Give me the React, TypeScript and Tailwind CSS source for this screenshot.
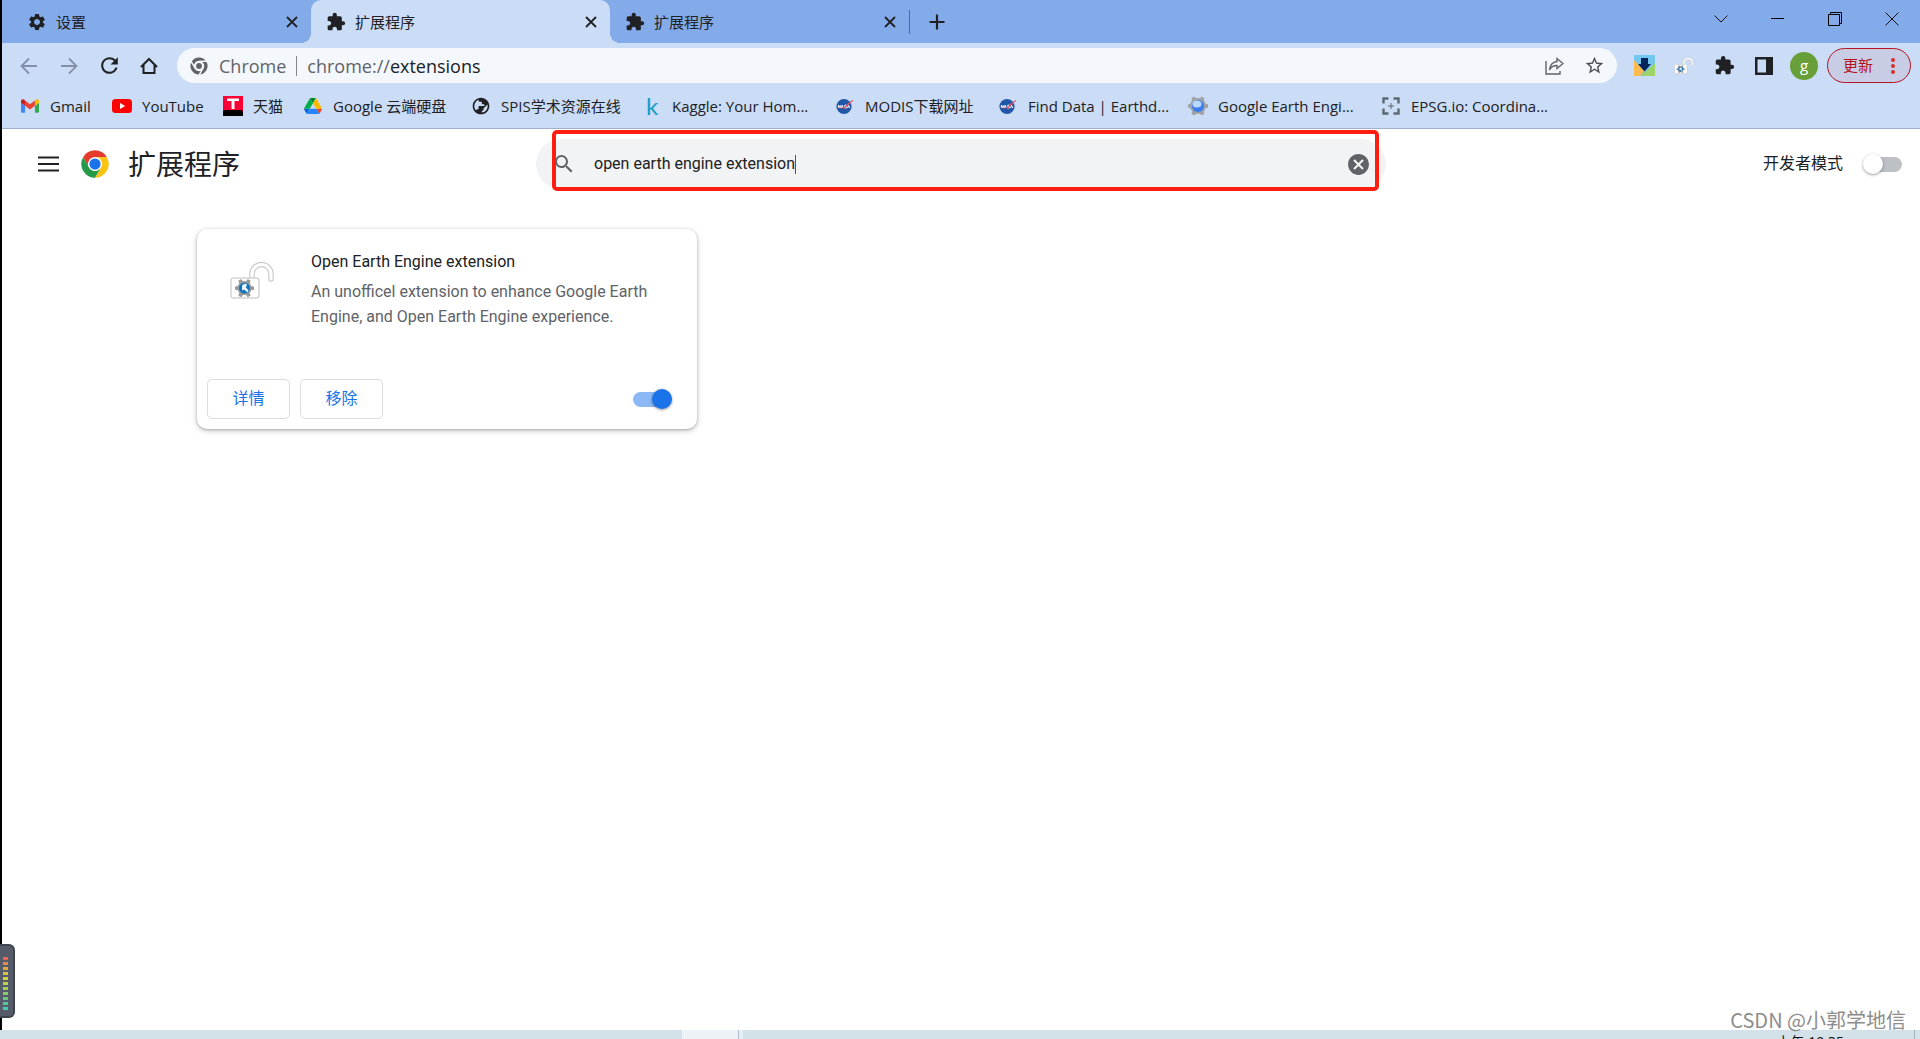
import React, {useState} from "react";
import {
    MdExtension, MdPublic, MdRefresh, MdSearch, MdSettings, MdStarBorder, MdCancel
} from "react-icons/md";

const ChromeLogo = ({className, mono = false}: { className: string, mono?: boolean }) => {
    const piece = "M4.95 13A22 22 0 0 1 43.05 13L24 13A11 11 0 0 0 14.47 29.5Z"
    return (
        <svg viewBox="0 0 48 48" className={className} aria-hidden="true">
            <g stroke={mono ? "#f4f8fd" : "none"} strokeWidth={mono ? 3 : 0}>
                <path d={piece} fill={mono ? "#5f6368" : "#e33b2e"}/>
                <path d={piece} fill={mono ? "#5f6368" : "#fcc313"} transform="rotate(120 24 24)"/>
                <path d={piece} fill={mono ? "#5f6368" : "#269a48"} transform="rotate(240 24 24)"/>
            </g>
            <circle cx="24" cy="24" r="11" fill={mono ? "#f4f8fd" : "#fff"}/>
            <circle cx="24" cy="24" r={mono ? 7 : 9} fill={mono ? "#5f6368" : "#1a73e8"}/>
        </svg>
    )
}

const GmailIcon = () => (
    <svg viewBox="52 42 88 66" className="w-[18px] h-[14px]" aria-hidden="true">
        <path fill="#4285f4" d="M58 108h14V74L52 59v43c0 3.32 2.69 6 6 6"/>
        <path fill="#34a853" d="M120 108h14c3.32 0 6-2.69 6-6V59l-20 15"/>
        <path fill="#fbbc04" d="M120 48v26l20-15v-8c0-7.42-8.47-11.65-14.4-7.2"/>
        <path fill="#ea4335" d="M72 74V48l24 18 24-18v26L96 92"/>
        <path fill="#c5221f" d="M52 51v8l20 15V48l-5.6-4.2c-5.94-4.45-14.4-.22-14.4 7.2"/>
    </svg>
)

const YouTubeIcon = () => (
    <svg viewBox="0 0 20 14" className="w-5 h-[14px]" aria-hidden="true">
        <rect width="20" height="14" rx="3.5" fill="#f00"/>
        <path d="M8 4v6l5.2-3z" fill="#fff"/>
    </svg>
)

const TmallIcon = () => (
    <svg viewBox="0 0 20 20" className="w-5 h-5" aria-hidden="true">
        <rect width="20" height="20" fill="#ff0036"/>
        <path d="M0 16q0-2 2-2h16q2 0 2 2v4H0z" fill="#000"/>
        <path d="M4 2.500h12v2.500h-4.500v8h-3V5H4z" fill="#fff"/>
    </svg>
)

const DriveIcon = () => (
    <svg viewBox="0 0 87.3 78" className="w-[18px] h-4" aria-hidden="true">
        <path d="m6.6 66.85 3.85 6.65c.8 1.4 1.95 2.5 3.3 3.3L27.5 53H0c0 1.55.4 3.1 1.2 4.5z" fill="#0066da"/>
        <path d="M43.65 25 29.9 1.2c-1.35.8-2.5 1.9-3.3 3.3l-25.4 44A9.06 9.06 0 0 0 0 53h27.5z" fill="#00ac47"/>
        <path d="M73.55 76.8c1.35-.8 2.5-1.9 3.3-3.3l1.6-2.75 7.65-13.25c.8-1.4 1.2-2.95 1.2-4.5H59.8l5.85 11.5z" fill="#ea4335"/>
        <path d="M43.65 25 57.4 1.2C56.05.4 54.5 0 52.9 0H34.4c-1.6 0-3.15.45-4.5 1.2z" fill="#00832d"/>
        <path d="M59.8 53H27.5L13.75 76.8c1.35.8 2.9 1.2 4.5 1.2h50.8c1.6 0 3.15-.45 4.5-1.2z" fill="#2684fc"/>
        <path d="m73.4 26.5-12.7-22c-.8-1.4-1.95-2.5-3.3-3.3L43.65 25 59.8 53h27.45c0-1.55-.4-3.1-1.2-4.5z" fill="#ffba00"/>
    </svg>
)

const NasaIcon = () => (
    <svg viewBox="0 0 18 17" className="w-[18px] h-[17px]" aria-hidden="true">
        <circle cx="8" cy="8.5" r="7.6" fill="#2157a8"/>
        <path d="M2.4 10V7.2L4.2 10V7.2M5.2 10l1-2.8 1 2.8M10.6 7.2H8.8v1.3h1.6V10H8.4M11.6 10l1-2.8 1 2.8"
              fill="none" stroke="#fff" strokeWidth="1"/>
        <path d="M17 2.5C13 4.500 10.500 7 8.500 11" fill="none" stroke="#e8505f" strokeWidth="1.2"/>
        <path d="M2 9.5C7 11 11 9 15 5" fill="none" stroke="#e8505f" strokeWidth=".5"/>
    </svg>
)

const EarthEngineIcon = () => (
    <svg viewBox="0 0 20 20" className="w-5 h-5" aria-hidden="true">
        <g fill="#a0a2a5">
            <rect x="0" y="8" width="20" height="4" rx="1"/>
            <rect x="0" y="8" width="20" height="4" rx="1" transform="rotate(60 10 10)"/>
            <rect x="0" y="8" width="20" height="4" rx="1" transform="rotate(120 10 10)"/>
            <circle cx="10" cy="10" r="8"/>
        </g>
        <circle cx="10" cy="10" r="6" fill="#3b7cf0"/>
        <ellipse cx="9" cy="8" rx="4.5" ry="3.5" fill="#b9d8fd"/>
    </svg>
)

const EpsgIcon = () => (
    <svg viewBox="0 0 18 18" className="w-[18px] h-[18px]" fill="none" stroke="#5c6970" aria-hidden="true">
        <path d="M1.5 6.5v-5h5M11.5 1.5h5v5M16.5 11.5v5h-5M6.5 16.5h-5v-5" strokeWidth="2.4"/>
        <path d="M9 6v6M6 9h6" strokeWidth="1"/>
    </svg>
)

const LockIcon = ({className}: { className: string }) => (
    <svg viewBox="0 0 44 38" className={className} aria-hidden="true">
        <path d="M22 19v-6a9.5 9.5 0 0 1 19 0v5" fill="none" stroke="#c8c8c8" strokeWidth="5.4" strokeLinecap="round"/>
        <path d="M22 19v-6a9.5 9.5 0 0 1 19 0v5" fill="none" stroke="#fff" strokeWidth="3.2" strokeLinecap="round"/>
        <rect x="1" y="17" width="28" height="20" rx="2" fill="#fff" stroke="#bdbdbd"/>
        <g fill="#999">
            <rect x="5" y="25.2" width="19" height="3.8" rx="1"/>
            <rect x="5" y="25.2" width="19" height="3.8" rx="1" transform="rotate(60 14.5 27.1)"/>
            <rect x="5" y="25.2" width="19" height="3.8" rx="1" transform="rotate(120 14.5 27.1)"/>
            <circle cx="14.5" cy="27.1" r="7"/>
        </g>
        <circle cx="14.5" cy="27.1" r="5.4" fill="#0b72c4"/>
        <path d="M12 24.5q3-3 5-1l-1 3 2.5 3-1 2-3.500-3-2 1z" fill="#eaf5fd"/>
    </svg>
)

const tabs = [
    {title: "设置", icon: <MdSettings size={20}/>, active: false},
    {title: "扩展程序", icon: <MdExtension size={20}/>, active: true},
    {title: "扩展程序", icon: <MdExtension size={20}/>, active: false},
]

const bookmarks = [
    {name: "Gmail", icon: <GmailIcon/>, width: "w-[92px]"},
    {name: "YouTube", icon: <YouTubeIcon/>, width: "w-[111px]"},
    {name: "天猫", icon: <TmallIcon/>, width: "w-20"},
    {name: "Google 云端硬盘", icon: <DriveIcon/>, width: "w-[168px]"},
    {name: "SPIS学术资源在线", icon: <MdPublic size={22} className="text-[#202124] -scale-x-100"/>, width: "w-[171px]"},
    {name: "Kaggle: Your Hom...", icon: <span className="text-[24px] leading-5 text-[#149bc8] font-[Lato,sans-serif]">k</span>, width: "w-[193px]"},
    {name: "MODIS下载网址", icon: <NasaIcon/>, width: "w-[163px]"},
    {name: "Find Data | Earthd...", icon: <NasaIcon/>, width: "w-[190px]"},
    {name: "Google Earth Engi...", icon: <EarthEngineIcon/>, width: "w-[193px]"},
    {name: "EPSG.io: Coordina...", icon: <EpsgIcon/>, width: "w-[193px]"},
]

const TabStrip = () => (
    <div className="h-[43px] flex bg-[#84abe9] text-[#202124]">
        {tabs.map((tab, i) => (
            <div key={i}
                 className={"relative flex items-center w-[299px] pl-[15px] pr-[9px] h-[43px] first:w-[309px] first:pl-[25px] " +
                     (tab.active ? "bg-[#cbdcf6] rounded-t-[10px]" : "")}>
                {tab.active && <>
                    <span className="absolute bottom-0 -left-[10px] w-[10px] h-[10px] bg-[radial-gradient(circle_at_0_0,#84abe9_10px,#cbdcf6_10px)]"/>
                    <span className="absolute bottom-0 -right-[10px] w-[10px] h-[10px] bg-[radial-gradient(circle_at_100%_0,#84abe9_10px,#cbdcf6_10px)]"/>
                </>}
                {tab.icon}
                <span className="ml-[9px] flex-1 text-[15px] leading-5">{tab.title}</span>
                <button aria-label="关闭标签页" className="w-5 h-5 flex items-center justify-center">
                    <svg viewBox="0 0 12 12" className="w-3 h-3" stroke="#202124" strokeWidth="1.8"><path d="M1 1l10 10M11 1L1 11"/></svg>
                </button>
            </div>
        ))}
        <span className="w-px h-6 my-auto bg-[#4f6b96]"/>
        <button aria-label="新标签页" className="w-[54px] flex items-center justify-center">
            <svg viewBox="0 0 16 16" className="w-4 h-4" stroke="#202124" strokeWidth="2.2"><path d="M8 .5v15M.5 8h15"/></svg>
        </button>
        <div className="ml-auto flex h-[37px]">
            <button aria-label="搜索标签页" className="w-[57px] flex items-center justify-center">
                <svg viewBox="0 0 14 8" className="w-[14px] h-2" fill="none" stroke="#111"><path d="M.5.5L7 7 13.5.5"/></svg>
            </button>
            <button aria-label="最小化" className="w-[57px] flex items-center justify-center">
                <span className="w-[13px] h-px bg-black"/>
            </button>
            <button aria-label="还原" className="w-[57px] flex items-center justify-center">
                <svg viewBox="0 0 14 14" className="w-[14px] h-[14px]" fill="none" stroke="#000"><path d="M.5 2.5h11v11H.5zM2.5 2.5v-2h11v11h-2"/></svg>
            </button>
            <button aria-label="关闭" className="w-[57px] flex items-center justify-center">
                <svg viewBox="0 0 14 14" className="w-[14px] h-[14px]" stroke="#111"><path d="M.5.5l13 13M13.5.5l-13 13"/></svg>
            </button>
        </div>
    </div>
)

const ToolButton = ({label, children}: { label: string, children: React.ReactNode }) => (
    <button aria-label={label} className="w-10 h-[35px] shrink-0 flex items-center justify-center text-[#202124]">{children}</button>
)

const Toolbar = () => (
    <div className="h-[45px] flex items-center pl-[7px] pr-[9px]">
        <ToolButton label="后退">
            <svg viewBox="0 0 18 18" className="w-[18px] h-[18px]" fill="none" stroke="#8490a8" strokeWidth="1.8"><path d="M17 9H2M9 1.5L1.5 9 9 16.5"/></svg>
        </ToolButton>
        <ToolButton label="前进">
            <svg viewBox="0 0 18 18" className="w-[18px] h-[18px]" fill="none" stroke="#8490a8" strokeWidth="1.8"><path d="M1 9h15M9 1.5L16.5 9 9 16.5"/></svg>
        </ToolButton>
        <ToolButton label="重新加载"><MdRefresh size={25}/></ToolButton>
        <ToolButton label="主页">
            <svg viewBox="0 0 18 18" className="w-[18px] h-[18px]" fill="none" stroke="#202124" strokeWidth="2"><path d="M1 10L9 2l8 8M3.5 8v8h11V8"/></svg>
        </ToolButton>
        <div className="ml-2 flex-1 h-[35px] rounded-full bg-[#f4f8fd] flex items-center pl-3 pr-[3px] text-lg leading-6 text-[#5f6368]">
            <ChromeLogo mono className="w-5 h-5"/>
            <span className="ml-[10px]">Chrome</span>
            <span className="w-px h-5 mx-[10px] bg-[#80868b]"/>
            <span className="flex-1">chrome://<span className="text-[#202124]">extensions</span></span>
            <ToolButton label="分享">
                <svg viewBox="0 0 19 18" className="w-[19px] h-[18px]" fill="none" stroke="#5f6368" strokeWidth="1.4">
                    <path d="M1 4v13h14v-3"/>
                    <path d="M12 1.5l6 5-6 5V8.5c-4 0-6 1.5-7.5 4.5C5 8 7.5 5 12 4.5z"/>
                </svg>
            </ToolButton>
            <ToolButton label="为此标签页添加书签"><MdStarBorder size={21} color="#4a4d52"/></ToolButton>
        </div>
        <div className="ml-[7px] flex items-center">
            <ToolButton label="下载器">
                <svg viewBox="0 0 21 21" className="w-[21px] h-[21px]" aria-hidden="true">
                    <rect width="21" height="21" fill="#72c6ef"/>
                    <path d="M0 5l10.5 11L6 21H0z" fill="#fdbb4f"/>
                    <path d="M21 8L6.5 21H21z" fill="#9ed36a"/>
                    <path d="M7 3h7v6h3l-6.5 7.5L4 9h3z" fill="#04245c"/>
                </svg>
            </ToolButton>
            <ToolButton label="Open Earth Engine extension"><LockIcon className="w-5 h-[17px]"/></ToolButton>
            <ToolButton label="扩展程序"><MdExtension size={21}/></ToolButton>
            <ToolButton label="侧边栏">
                <svg viewBox="0 0 18 18" className="w-[18px] h-[18px]" aria-hidden="true"><path fillRule="evenodd" d="M0 0h18v18H0zM2.5 2.5v13H11v-13z" fill="#202124"/></svg>
            </ToolButton>
            <ToolButton label="个人资料">
                <span className="w-7 h-7 rounded-full bg-[#689f38] text-white text-[15px] leading-[26px]">g</span>
            </ToolButton>
            <button className="ml-[3px] w-21 h-[35px] rounded-full border border-[#b3141d] bg-[#c9cce5] flex items-center pl-[15px] text-[15px] text-[#b3141d]">
                更新
                <svg viewBox="0 0 4 16" className="ml-[18px] w-1 h-4" fill="#d93025"><circle cx="2" cy="2" r="2"/><circle cx="2" cy="8" r="2"/><circle cx="2" cy="14" r="2"/></svg>
            </button>
        </div>
    </div>
)

const BookmarkBar = () => (
    <nav className="h-[41px] flex items-center pl-[18px] pb-1 border-b border-[#9fb0cf]">
        {bookmarks.map(b => (
            <a key={b.name} href="#" className={"flex items-center whitespace-nowrap text-[15px] leading-5 text-[#202124] " + b.width}>
                <span className="w-5 mr-[10px] flex justify-center shrink-0">{b.icon}</span>
                {b.name}
            </a>
        ))}
    </nav>
)

const Toggle = ({id, checked, onChange}: { id: string, checked: boolean, onChange: (v: boolean) => void }) => (
    <span className={"relative w-[39px] h-5 flex items-center " + (checked ? "justify-start" : "justify-end")}>
        <input id={id} type="checkbox" role="switch" aria-label={id} checked={checked}
               onChange={e => onChange(e.target.checked)}
               className="appearance-none w-[35px] h-[15px] rounded-full bg-[#bdc1c6] checked:bg-[#8cb8f5]"/>
        <span className={"absolute top-0 w-5 h-5 rounded-full pointer-events-none shadow-[0_1px_3px_rgba(0,0,0,0.4)] " +
            (checked ? "right-0 bg-[#1a73e8]" : "left-0 bg-white")}/>
    </span>
)

const ExtensionCard = () => {
    const [enabled, setEnabled] = useState(true)

    return (
        <article className="h-[200px] rounded-[10px] bg-white flex flex-col shadow-[0_1px_3px_rgba(60,64,67,0.35),0_2px_6px_rgba(60,64,67,0.2)]">
            <div className="flex-1 flex pt-5 pl-[33px] pr-6">
                <LockIcon className="mt-3 w-11 h-[38px] shrink-0"/>
                <div className="ml-[37px]">
                    <h2 className="text-base leading-[26px] text-[#202124]">Open Earth Engine extension</h2>
                    <p className="mt-1 text-base leading-[25px] text-[#5f6368]">
                        An unofficel extension to enhance Google Earth Engine, and Open Earth Engine experience.
                    </p>
                </div>
            </div>
            <div className="flex items-center gap-[10px] pl-[10px] pr-[25px] pb-[10px]">
                <button className="w-[83px] h-10 border border-[#dadce0] rounded-[5px] text-base text-[#1a73e8]">详情</button>
                <button className="w-[83px] h-10 border border-[#dadce0] rounded-[5px] text-base text-[#1a73e8]">移除</button>
                <div className="ml-auto"><Toggle id="启用" checked={enabled} onChange={setEnabled}/></div>
            </div>
        </article>
    )
}

const PageHeader = () => {
    const [query, setQuery] = useState("open earth engine extension")
    const [devMode, setDevMode] = useState(false)

    return (
        <header className="h-[70px] grid grid-cols-[1fr_850px_1fr] items-center">
            <div className="flex items-center pl-9">
                <button aria-label="主菜单">
                    <svg viewBox="0 0 21 16" className="w-[21px] h-4" stroke="#202124" strokeWidth="2"><path d="M0 1.5h21M0 8h21M0 14.5h21"/></svg>
                </button>
                <ChromeLogo className="ml-[21px] w-[30px] h-[30px]"/>
                <h1 className="ml-[18px] pt-1 text-[28px] leading-9 text-[#202124]">扩展程序</h1>
            </div>
            <div className="relative h-[50px] rounded-full bg-[#f1f3f4] flex items-center pl-4 pr-[15px]">
                <MdSearch size={24} color="#5f6368"/>
                <input type="text" aria-label="搜索扩展程序" value={query} onChange={e => setQuery(e.target.value)}
                       className="ml-[18px] [field-sizing:content] bg-transparent outline-none text-base leading-5 text-[#202124]"/>
                <span className="w-px h-[19px] bg-[#1a5fc9]"/>
                <button aria-label="清除搜索内容" className="ml-auto" onClick={() => setQuery("")}><MdCancel size={25} color="#5f6368"/></button>
                <span className="absolute -top-[9px] left-4 right-[7px] h-[61px] border-4 border-[#ff1f10] rounded-[5px] pointer-events-none"/>
            </div>
            <div className="flex items-center justify-end pr-[18px] gap-5">
                <label htmlFor="开发者模式" className="text-base text-[#202124]">开发者模式</label>
                <Toggle id="开发者模式" checked={devMode} onChange={setDevMode}/>
            </div>
        </header>
    )
}

// volume meter docked to the left screen edge
const meterColors = [
    "bg-[#e8635c]", "bg-[#e08a4e]", "bg-[#e5a63c]", "bg-[#d8c04a]", "bg-[#d6cf3f]", "bg-[#bcd04c]",
    "bg-[#a3cf50]", "bg-[#86cc6c]", "bg-[#68c97e]", "bg-[#4fc898]", "bg-[#3fcdb4]",
]

const EdgeMeter = () => (
    <div className="absolute left-0 bottom-[21px] w-[15px] h-[74px] rounded-r-md bg-[#555b69] border-2 border-l-0 border-[#3f434e] pt-[11px] pl-[3px]">
        <div className="flex flex-col gap-[2px] w-[5px]">
            {meterColors.map(c => <span key={c} className={"h-[3px] " + c}/>)}
        </div>
    </div>
)

const Taskbar = () => (
    <footer className="h-[9px] overflow-hidden bg-[#d3e1e9] flex text-sm leading-5 text-[#111]">
        <span className="ml-[682px] w-14 bg-[#ecf2f6]"/>
        <span className="w-px bg-[#a9bdca]"/>
        <span className="w-1 bg-[#e6eef3]"/>
        <span className="ml-auto mr-[70px] pt-[2px]">上午 10:35</span>
        <span className="w-px mr-[5px] bg-[#9fb2be]"/>
    </footer>
)

const App = () => {
    return (
        <div className="relative min-h-screen flex flex-col bg-white font-['Open_Sans','Noto_Sans_CJK_SC',sans-serif]">
            <div className="flex-1 flex flex-col border-l-2 border-black">
                <div className="bg-[#cbdcf6]">
                    <TabStrip/>
                    <Toolbar/>
                    <BookmarkBar/>
                </div>
                <main className="font-[Roboto,'Noto_Sans_CJK_SC',sans-serif]">
                    <PageHeader/>
                    <section className="pt-[30px] grid grid-cols-[repeat(auto-fill,500px)] gap-[14px] justify-center">
                        <ExtensionCard/>
                    </section>
                </main>
            </div>
            <Taskbar/>
            <EdgeMeter/>
            <span className="absolute right-[14px] bottom-[7px] text-xl leading-6 text-[#8d8d8d] font-['Noto_Sans_CJK_SC',sans-serif] [text-shadow:-1px_-1px_0_#fff]">
                CSDN @小郭学地信
            </span>
        </div>
    )
}

export default App
